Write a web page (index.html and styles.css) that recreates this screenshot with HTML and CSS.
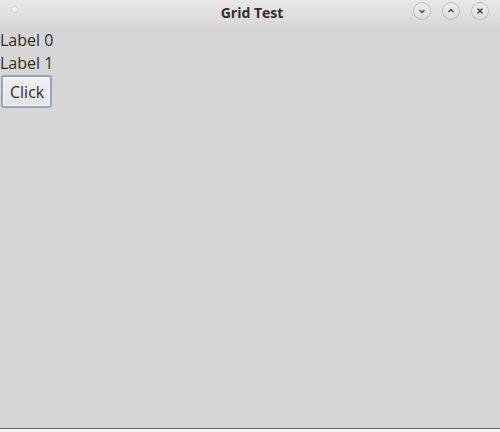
FILE: index.html
```html
<!DOCTYPE html>
<html>
<head>
<meta charset="utf-8">
<link rel="stylesheet" href="styles.css">
</head>
<body>
<div class="window">
  <div class="titlebar">
    <span class="dot"></span>
    <span class="title">Grid Test</span>
    <div class="controls">
      <span class="ctl"><svg width="16" height="16" viewBox="0 0 16 16"><path d="M5.5 7 L8 9.5 L10.5 7" fill="none" stroke="#444" stroke-width="1.4"/></svg></span>
      <span class="ctl"><svg width="16" height="16" viewBox="0 0 16 16"><path d="M5.5 9 L8 6.5 L10.5 9" fill="none" stroke="#444" stroke-width="1.4"/></svg></span>
      <span class="ctl"><svg width="16" height="16" viewBox="0 0 16 16"><path d="M5.5 5.5 L10.5 10.5 M10.5 5.5 L5.5 10.5" fill="none" stroke="#444" stroke-width="1.5"/></svg></span>
    </div>
  </div>
  <div class="content">
    <div class="label">Label 0</div>
    <div class="label">Label 1</div>
    <button class="btn">Click</button>
  </div>
  <div class="bottom"></div>
</div>
</body>
</html>
```
FILE: styles.css
```css
html, body { margin: 0; padding: 0; }
body { width: 500px; height: 432px; background: #f4f4f4; font-family: "Open Sans", "DejaVu Sans", sans-serif; }
.window { display: flex; flex-direction: column; height: 432px; }
.titlebar {
  height: 26px; flex: none; position: relative;
  background: linear-gradient(#e9e9e9, #d8d8d8);
  display: flex; align-items: center; justify-content: center;
}
.dot {
  position: absolute; left: 11px; top: 6px; width: 7px; height: 7px; border-radius: 50%;
  background: #f2f2f2; border: 1px solid #cfcfcf; box-sizing: border-box;
}
.title { font-weight: bold; font-size: 14px; color: #2e2e2e; margin-top: -1px; padding-left: 4px; }
.controls { position: absolute; right: 11px; top: 2px; display: flex; gap: 11px; }
.ctl {
  width: 18px; height: 18px; border-radius: 50%; box-sizing: border-box;
  border: 1px solid #bdbdbd; background: linear-gradient(#ececec, #dedede);
  display: flex; align-items: center; justify-content: center;
}
.content { flex: 1; background: #d6d6d6; padding: 3px 0 0 0; display: flex; flex-direction: column; align-items: flex-start; }
.label { font-size: 16px; line-height: 23px; color: #33291f; }
.btn {
  margin: 0 0 0 1px; height: 33px; padding: 0 6px 0 7px; font-family: inherit; font-size: 16px; color: #3c2810;
  border: 2px solid #8fa6c2; border-radius: 3px; background: linear-gradient(#f0f0f0, #e4e4e4);
  box-shadow: inset 0 0 0 1px #f8f8f8;
}
.bottom { height: 4px; flex: none; border-top: 1px solid #666; background: #f4f4f4; box-sizing: border-box; }
```
